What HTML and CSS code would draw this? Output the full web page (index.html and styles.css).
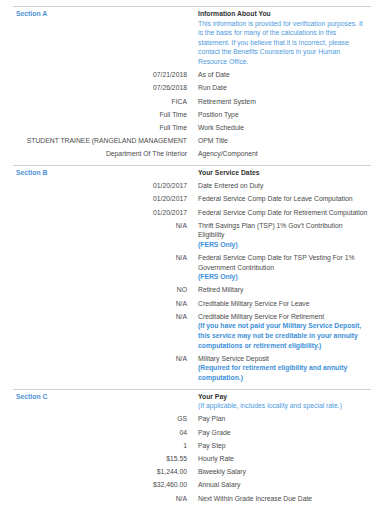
FILE: index.html
```html
<!DOCTYPE html>
<html lang="en">
<head>
<meta charset="utf-8">
<title>Information About You</title>
<link rel="stylesheet" href="styles.css">
</head>
<body>
<div class="statement">
  <section class="section">
    <div class="row">
      <div class="sec-name">Section A</div>
      <div class="label"><div class="head">Information About You</div><div class="desc">This information is provided for verification purposes. It is the basis for many of the calculations in this statement. If you believe that it is incorrect, please contact the Benefits Counselors in your Human Resource Office.</div></div>
    </div>
    <div class="row"><div class="value">07/21/2018</div><div class="label">As of Date</div></div>
    <div class="row"><div class="value">07/26/2018</div><div class="label">Run Date</div></div>
    <div class="row"><div class="value">FICA</div><div class="label">Retirement System</div></div>
    <div class="row"><div class="value">Full Time</div><div class="label">Position Type</div></div>
    <div class="row"><div class="value">Full Time</div><div class="label">Work Schedule</div></div>
    <div class="row"><div class="value">STUDENT TRAINEE (RANGELAND MANAGEMENT</div><div class="label">OPM Title</div></div>
    <div class="row"><div class="value">Department Of The Interior</div><div class="label">Agency/Component</div></div>
  </section>
  <section class="section">
    <div class="row">
      <div class="sec-name">Section B</div>
      <div class="label"><div class="head">Your Service Dates</div></div>
    </div>
    <div class="row"><div class="value">01/20/2017</div><div class="label">Date Entered on Duty</div></div>
    <div class="row"><div class="value">01/20/2017</div><div class="label">Federal Service Comp Date for Leave Computation</div></div>
    <div class="row"><div class="value">01/20/2017</div><div class="label">Federal Service Comp Date for Retirement Computation</div></div>
    <div class="row"><div class="value">N/A</div><div class="label">Thrift Savings Plan (TSP) 1% Gov't Contribution Eligibility<div class="note">(FERS Only)</div></div></div>
    <div class="row"><div class="value">N/A</div><div class="label">Federal Service Comp Date for TSP Vesting For 1% Government Contribution<div class="note">(FERS Only)</div></div></div>
    <div class="row"><div class="value">NO</div><div class="label">Retired Military</div></div>
    <div class="row"><div class="value">N/A</div><div class="label">Creditable Military Service For Leave</div></div>
    <div class="row"><div class="value">N/A</div><div class="label">Creditable Military Service For Retirement<div class="note">(If you have not paid your Military Service Deposit, this service may not be creditable in your annuity computations or retirement eligibility.)</div></div></div>
    <div class="row"><div class="value">N/A</div><div class="label">Military Service Deposit<div class="note">(Required for retirement eligibility and annuity computation.)</div></div></div>
  </section>
  <section class="section">
    <div class="row">
      <div class="sec-name">Section C</div>
      <div class="label"><div class="head">Your Pay</div><div class="desc">(If applicable, includes locality and special rate.)</div></div>
    </div>
    <div class="row"><div class="value">GS</div><div class="label">Pay Plan</div></div>
    <div class="row"><div class="value">04</div><div class="label">Pay Grade</div></div>
    <div class="row"><div class="value">1</div><div class="label">Pay Step</div></div>
    <div class="row"><div class="value">$15.55</div><div class="label">Hourly Rate</div></div>
    <div class="row"><div class="value">$1,244.00</div><div class="label">Biweekly Salary</div></div>
    <div class="row"><div class="value">$32,460.00</div><div class="label">Annual Salary</div></div>
    <div class="row"><div class="value">N/A</div><div class="label">Next Within Grade Increase Due Date</div></div>
  </section>
</div>
</body>
</html>
```
FILE: styles.css
```css
html, body {
  margin: 0;
  padding: 0;
  background: #ffffff;
}
body {
  font-family: "Liberation Sans", Arial, sans-serif;
  font-size: 6.8px;
  line-height: 9.6px;
  color: #4a4a4a;
}
.statement {
  padding: 6px 19px 0 13px;
}
.section {
  border-top: 1px solid #cfcfcf;
  padding: 2px 0 2.5px;
}
.row {
  display: grid;
  grid-template-columns: 174px 171px;
  column-gap: 11px;
  margin-bottom: 3.6px;
}
.sec-name {
  padding-left: 3px;
  font-weight: bold;
  color: #4a90d6;
}
.value {
  text-align: right;
  white-space: nowrap;
}
.head {
  font-weight: bold;
  color: #333333;
}
.desc {
  color: #4d9ade;
}
.note {
  font-weight: bold;
  color: #3d8fd8;
}
```
